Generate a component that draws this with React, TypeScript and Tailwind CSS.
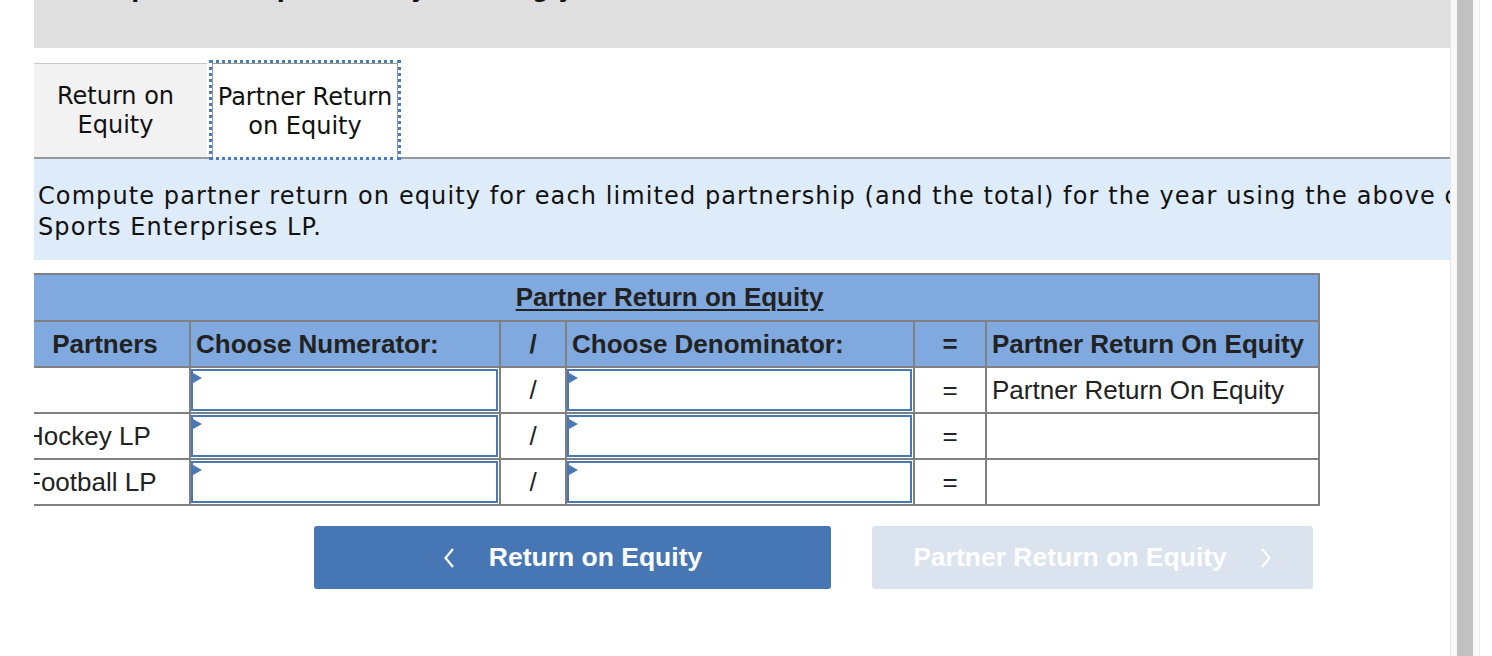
import React from "react";

const verdana = { fontFamily: '"DejaVu Sans", Verdana, sans-serif' };
const arial = { fontFamily: '"Liberation Sans", Arial, sans-serif' };

const cols = "grid grid-cols-[168px_310px_66px_348px_72px_333px]";

function Chevron({ dir }: { dir: "left" | "right" }) {
  return (
    <svg width="12" height="20" viewBox="0 0 12 20" fill="none" stroke="currentColor" strokeWidth="2.2">
      {dir === "left" ? <polyline points="10,1 2.5,10 10,19" /> : <polyline points="2,1 9.5,10 2,19" />}
    </svg>
  );
}

function PickInput() {
  return (
    <div className="relative h-full border-2 border-[#4a78b4] bg-white">
      <span className="absolute left-0 top-[2px] h-0 w-0 border-y-[5px] border-l-[9px] border-y-transparent border-l-[#4a78b4]" />
    </div>
  );
}

const rows = [
  { label: "", result: "Partner Return On Equity" },
  { label: "Hockey LP", result: "" },
  { label: "Football LP", result: "" },
];

export default function App() {
  return (
    <div className="flex h-[656px] w-[1492px] overflow-hidden bg-white text-[#111]">
      <div className="w-[34px] shrink-0" />

      <div className="flex w-[1416px] shrink-0 flex-col overflow-hidden">
        {/* header bar, text scrolled off the top */}
        <div className="h-[48px] shrink-0 overflow-hidden bg-[#dfdfdf]">
          <div
            className="mt-[-22px] whitespace-nowrap pl-[39px] text-[23px] font-bold leading-none tracking-[0.5px]"
            style={verdana}
          >
            Complete this question by entering your answers in the tabs below.
          </div>
        </div>

        {/* tabs */}
        <div className="mt-[15px] flex h-[96px] shrink-0 items-stretch" style={verdana}>
          <div className="-ml-[10px] flex w-[183px] flex-col items-center justify-center border-t border-b-2 border-t-[#c8c8c8] border-b-[#999] bg-[#f2f2f2] text-center text-[24px] leading-[29px]">
            <span>Return on</span>
            <span>Equity</span>
          </div>
          <div className="w-[5px] border-b-2 border-[#999]" />
          <div className="relative flex w-[186px] flex-col items-center justify-center border-x border-t border-[#999] bg-white text-center text-[24px] leading-[29px]">
            <span>Partner Return</span>
            <span>on Equity</span>
            <span className="pointer-events-none absolute -inset-x-[4px] -bottom-[1px] -top-[4px] border-[3px] border-dotted border-[#4a7ebb]" />
          </div>
          <div className="flex-1 border-b-2 border-[#999]" />
        </div>

        {/* instructions */}
        <div className="h-[101px] shrink-0 overflow-hidden bg-[#deebf8] pl-[4px] pt-[22px]" style={verdana}>
          <p className="whitespace-nowrap text-[24px] leading-[31px] tracking-[1.1px]">
            Compute partner return on equity for each limited partnership (and the total) for the year using the above data for
            <br />
            Sports Enterprises LP.
          </p>
        </div>

        {/* table */}
        <div className="mt-[13px] shrink-0 overflow-hidden" style={arial}>
          <div className="-ml-[15px] w-[1301px] border-x-2 border-b-2 border-t-2 border-[#808080] text-[26px] text-[#222]">
            <div className="flex h-[45px] items-center justify-center bg-[#80aadf] font-bold underline decoration-2 underline-offset-[3px]">
              Partner Return on Equity
            </div>
            <div className={`${cols} h-[46px] border-t-2 border-[#808080] bg-[#80aadf] font-bold`}>
              <div className="flex items-center justify-center">Partners</div>
              <div className="flex items-center border-l-2 border-[#808080] pl-[5px]">Choose Numerator:</div>
              <div className="flex items-center justify-center border-l-2 border-[#808080]">/</div>
              <div className="flex items-center border-l-2 border-[#808080] pl-[5px]">Choose Denominator:</div>
              <div className="flex items-center justify-center border-l-2 border-[#808080]">=</div>
              <div className="flex items-center border-l-2 border-[#808080] pl-[5px]">Partner Return On Equity</div>
            </div>
            {rows.map((row, i) => (
              <div key={i} className={`${cols} h-[46px] border-t-2 border-[#808080] bg-white`}>
                <div className="flex items-center pl-[4px]">{row.label}</div>
                <div className="border-l-2 border-[#808080] p-[1px] pl-0">
                  <PickInput />
                </div>
                <div className="flex items-center justify-center border-l-2 border-[#808080]">/</div>
                <div className="border-l-2 border-[#808080] p-[1px] pl-0">
                  <PickInput />
                </div>
                <div className="flex items-center justify-center border-l-2 border-[#808080]">=</div>
                <div className="flex items-center border-l-2 border-[#808080] pl-[5px]">{row.result}</div>
              </div>
            ))}
          </div>
        </div>

        {/* nav buttons */}
        <div className="ml-[280px] mt-[20px] flex gap-[41px]" style={arial}>
          <button
            type="button"
            className="flex h-[63px] w-[517px] items-center justify-center gap-[34px] rounded-[3px] bg-[#4677b4] text-[26.5px] font-bold text-white"
          >
            <Chevron dir="left" />
            <span>Return on Equity</span>
          </button>
          <button
            type="button"
            className="flex h-[63px] w-[441px] items-center justify-center gap-[33px] rounded-[3px] bg-[#dae3ee] text-[26.5px] font-bold text-white"
          >
            <span>Partner Return on Equity</span>
            <Chevron dir="right" />
          </button>
        </div>
      </div>

      {/* scrollbar */}
      <div className="flex h-full w-[30px] shrink-0">
        <div className="w-[2px] bg-[#e6e6e6]" />
        <div className="flex flex-1 justify-center bg-[#f8f8f8] px-[6px]">
          <div className="w-[16px] bg-[#c1c1c1]" />
        </div>
        <div className="w-[2px] bg-[#ececec]" />
      </div>
    </div>
  );
}
